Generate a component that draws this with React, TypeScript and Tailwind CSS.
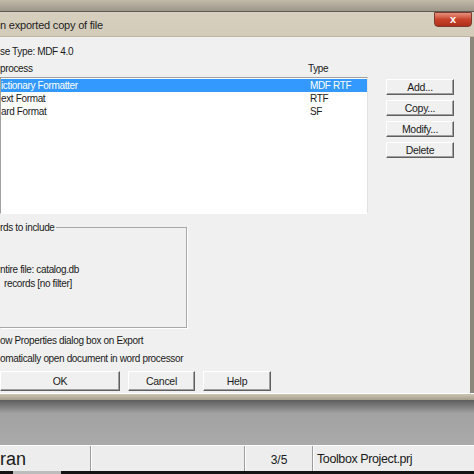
import React from 'react';

const font = "font-['Tahoma','Liberation_Sans',sans-serif]";

function Btn({ label, className = '' }: { label: string; className?: string }) {
  return (
    <div
      className={`flex h-[16px] items-center justify-center border border-t-white border-l-white border-b-[#5f5f5f] border-r-[#5f5f5f] bg-[#f0f0f0] text-[10.5px] tracking-[-0.3px] text-[#1a1a1a] shadow-[inset_-1px_-1px_0_#a0a0a0] ${className}`}
    >
      {label}
    </div>
  );
}

export default function App() {
  const rows = [
    { name: 'ictionary Formatter', type: 'MDF RTF', sel: true },
    { name: 'ext Format', type: 'RTF', sel: false },
    { name: 'ard Format', type: 'SF', sel: false },
  ];

  return (
    <div className={`flex h-[474px] w-[474px] flex-col overflow-hidden bg-[#a8a8a8] ${font}`}>
      {/* blurred desktop above the window */}
      <div className="h-[12px] shrink-0 border-b border-[#5e5b55] bg-gradient-to-b from-[#c2bba9] to-[#9d978a]" />

      {/* title bar */}
      <div className="flex h-[25px] shrink-0 items-start justify-between border-b border-[#bdb6a3] bg-gradient-to-b from-[#d6cfbd] to-[#d3ccba]">
        <span className="mt-[5px] text-[11px] tracking-[-0.2px] text-[#1e1e1e]">n exported copy of file</span>
        <div className="mr-[2px] flex h-[15px] w-[38px] items-center justify-center rounded-b-[4px] border border-[#7a3a2e] bg-gradient-to-b from-[#e6907c] via-[#c8412b] to-[#b0301c] text-[11px] font-bold leading-none text-white">
          x
        </div>
      </div>

      {/* dialog body */}
      <div className="flex h-[356px] shrink-0 border-r-[4px] border-[#8b877c] bg-[#f0f0f0]">
        <div className="flex w-[470px] flex-col text-[10px] leading-[13px] tracking-[-0.35px] text-[#1a1a1a]">
          <div className="mt-[8px] h-[13px]">se Type: MDF 4.0</div>
          <div className="mt-[4px] flex h-[13px]">
            <span className="w-[308px]">process</span>
            <span>Type</span>
          </div>

          <div className="mt-[2px] flex">
            {/* list box */}
            <div className="h-[137px] w-[368px] border border-t-[#a0a0a0] border-l-[#a0a0a0] border-b-white border-r-[#e3e3e3] bg-white pt-[1px]">
              {rows.map((r) => (
                <div
                  key={r.name}
                  className={`flex h-[13px] w-[366px] ${r.sel ? 'bg-[#3399ff] text-white' : ''}`}
                >
                  <span className="w-[309px]">{r.name}</span>
                  <span>{r.type}</span>
                </div>
              ))}
            </div>

            {/* side buttons */}
            <div className="ml-[18px] mt-[2px] flex w-[68px] flex-col gap-[5px]">
              <Btn label="Add..." />
              <Btn label="Copy..." />
              <Btn label="Modify..." />
              <Btn label="Delete" />
            </div>
          </div>

          {/* group box */}
          <div className="relative mt-[13px] h-[101px] w-[187px] border border-l-0 border-[#a8a8a8] shadow-[1px_1px_0_white]">
            <span className="absolute -top-[7px] left-0 bg-[#f0f0f0] pr-[1px]">rds to include</span>
            <div className="mt-[35px]">ntire file: catalog.db</div>
            <div className="mt-[1px] pl-[4px]">records [no filter]</div>
          </div>

          <div className="mt-[6px] h-[13px]">ow Properties dialog box on Export</div>
          <div className="mt-[5px] h-[13px]">omatically open document in word processor</div>

          <div className="mt-[6px] flex">
            <Btn label="OK" className="h-[20px] w-[120px] border-b-[#2e2e2e] border-r-[#2e2e2e] shadow-[inset_-1px_-1px_0_#808080]" />
            <Btn label="Cancel" className="ml-[8px] h-[20px] w-[67px]" />
            <Btn label="Help" className="ml-[8px] h-[20px] w-[68px]" />
          </div>
        </div>
      </div>

      {/* window bottom frame */}
      <div className="h-[7px] shrink-0 border-t border-white bg-gradient-to-b from-[#cdc6b3] to-[#a49e8d]" />

      {/* grey app area */}
      <div className="h-[45px] shrink-0 bg-gradient-to-b from-[#5d5d5d] via-[#a2a2a2] via-30% to-[#aaaaaa]" />

      {/* status bar */}
      <div className="flex h-[26px] shrink-0 border-t border-white bg-[#ededed] text-[#1a1a1a]">
        <div className="flex w-[91px] items-center border-r border-[#9c9c9c] text-[18px] leading-none">ran</div>
        <div className="w-[154px] border-l border-r border-l-white border-r-[#9c9c9c]" />
        <div className="flex w-[68px] items-center justify-center border-l border-r border-l-white border-r-[#9c9c9c] pt-[2px] text-[12px]">
          3/5
        </div>
        <div className="flex flex-1 items-center border-l border-white pl-[3px] pt-[2px] text-[12.5px] tracking-[-0.4px]">
          Toolbox Project.prj
        </div>
      </div>

      {/* taskbar sliver */}
      <div className="flex h-[4px] shrink-0 bg-[#141414]">
        <div className="ml-[13px] w-[48px] bg-[#bcbcbc]" />
      </div>
    </div>
  );
}
